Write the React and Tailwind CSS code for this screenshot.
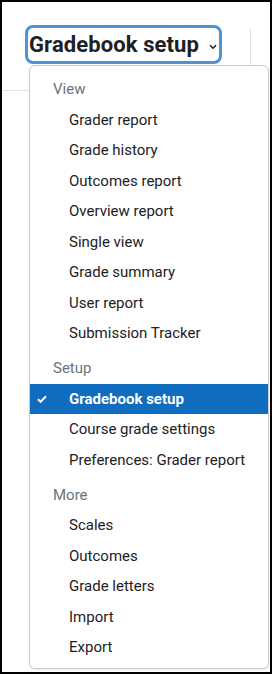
import React from "react";

const groups = [
  { title: "View", items: ["Grader report", "Grade history", "Outcomes report", "Overview report", "Single view", "Grade summary", "User report", "Submission Tracker"] },
  { title: "Setup", items: ["Gradebook setup", "Course grade settings", "Preferences: Grader report"] },
  { title: "More", items: ["Scales", "Outcomes", "Grade letters", "Import", "Export"] },
];

export default function App() {
  return (
    <div
      className="relative w-[272px] h-[674px] border-2 border-black bg-white overflow-hidden"
      style={{ fontFamily: "Roboto, 'Liberation Sans', sans-serif" }}
    >
      <div className="flex items-start pt-[23px] pl-[23px]">
        <button className="flex items-center w-[197px] h-[39px] border-[3px] border-[#4f93d4] rounded-[8px] pl-[1px] text-[#1d2125]">
          <span className="text-[22px] font-bold leading-none tracking-[0.1px]">Gradebook setup</span>
          <svg width="8" height="6" viewBox="0 0 8 6" className="ml-[10px] mt-[5px]">
            <path d="M1 1.2 L4 4.2 L7 1.2" fill="none" stroke="#1d2125" strokeWidth="1.6" />
          </svg>
        </button>
        <div className="ml-[28px] mt-[3px] w-px h-[37px] bg-[#dee2e6]" />
      </div>
      <div className="mt-[25px] h-px bg-[#dee2e6]" />

      <div className="absolute left-[27px] top-[63px] w-[240px] h-[604px] bg-white border border-[#c9cbcd] rounded-[6px] pt-[8px] shadow-[0_1px_2px_rgba(0,0,0,0.08)] text-[15px]">
        {groups.map((g, gi) => (
          <div key={g.title} className={gi > 0 ? "mt-[4.5px]" : ""}>
            <div className="h-[30.5px] flex items-center pl-[23px] text-[#6a737b]">{g.title}</div>
            {g.items.map((it) => {
              const active = it === "Gradebook setup";
              return (
                <div
                  key={it}
                  className={
                    "h-[30.5px] flex items-center relative pl-[39px] " +
                    (active ? "bg-[#0f6cbf] text-white font-bold" : "text-[#1d2125]")
                  }
                >
                  {active && (
                    <svg width="10" height="8" viewBox="0 0 10 8" className="absolute left-[7px] top-[11px]">
                      <path d="M1 4.2 L3.7 6.8 L9 1.2" fill="none" stroke="white" strokeWidth="2" />
                    </svg>
                  )}
                  {it}
                </div>
              );
            })}
          </div>
        ))}
      </div>
    </div>
  );
}
